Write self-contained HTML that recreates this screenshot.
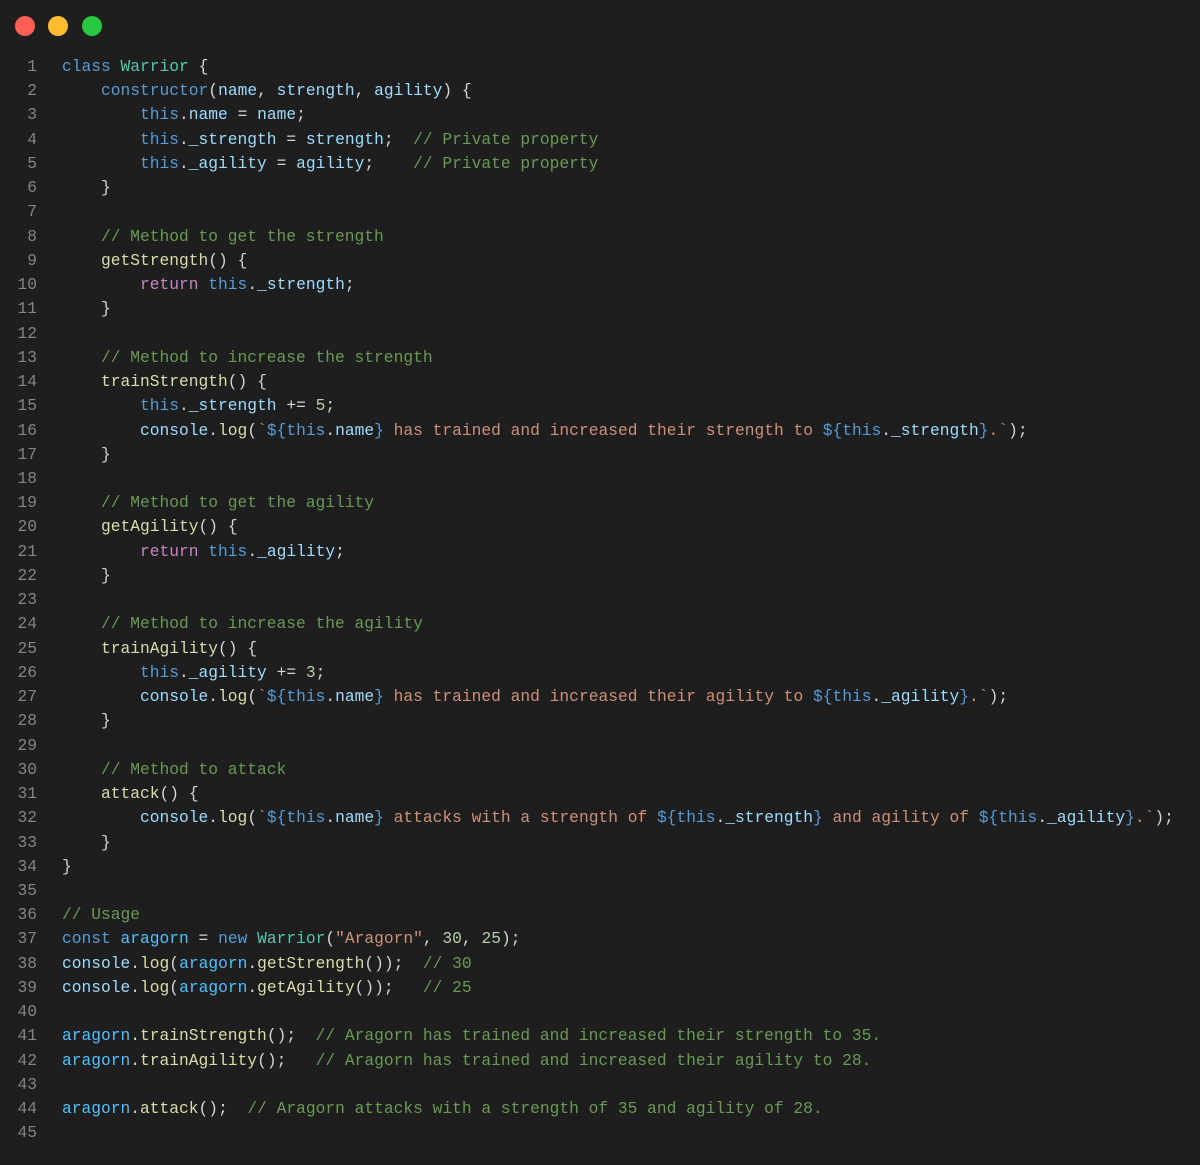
<!DOCTYPE html>
<html><head><meta charset="utf-8"><style>
html,body{margin:0;padding:0;background:#1e1e1e;width:1200px;height:1165px;overflow:hidden}
.dot{position:absolute;top:16px;width:20px;height:20px;border-radius:50%}
pre{position:absolute;left:0;top:55px;margin:0;font-family:"Liberation Mono",monospace;font-size:16.25px;line-height:24.23px;color:#d4d4d4}
.n{display:inline-block;width:37px;text-align:right;color:#858585;margin-right:25px}
.k{color:#569cd6}.c{color:#4ec9b0}.f{color:#dcdcaa}.v{color:#9cdcfe}.s{color:#ce9178}.m{color:#6a9955}.u{color:#b5cea8}.r{color:#c586c0}.a{color:#4fc1ff}.y{color:#d4d4d4}.p{color:#d4d4d4}.b{color:#d4d4d4}
</style></head><body>
<div class="dot" style="left:15px;background:#ff5f57"></div>
<div class="dot" style="left:48px;background:#febc2e"></div>
<div class="dot" style="left:82px;background:#28c840"></div>
<pre><span class="n">1</span><span class="k">class</span> <span class="c">Warrior</span> <span class="y">{</span>
<span class="n">2</span>    <span class="k">constructor</span><span class="p">(</span><span class="v">name</span>, <span class="v">strength</span>, <span class="v">agility</span><span class="p">)</span> <span class="p">{</span>
<span class="n">3</span>        <span class="k">this</span>.<span class="v">name</span> = <span class="v">name</span>;
<span class="n">4</span>        <span class="k">this</span>.<span class="v">_strength</span> = <span class="v">strength</span>;  <span class="m">// Private property</span>
<span class="n">5</span>        <span class="k">this</span>.<span class="v">_agility</span> = <span class="v">agility</span>;    <span class="m">// Private property</span>
<span class="n">6</span>    <span class="p">}</span>
<span class="n">7</span>
<span class="n">8</span>    <span class="m">// Method to get the strength</span>
<span class="n">9</span>    <span class="f">getStrength</span><span class="p">()</span> <span class="p">{</span>
<span class="n">10</span>        <span class="r">return</span> <span class="k">this</span>.<span class="v">_strength</span>;
<span class="n">11</span>    <span class="p">}</span>
<span class="n">12</span>
<span class="n">13</span>    <span class="m">// Method to increase the strength</span>
<span class="n">14</span>    <span class="f">trainStrength</span><span class="p">()</span> <span class="p">{</span>
<span class="n">15</span>        <span class="k">this</span>.<span class="v">_strength</span> += <span class="u">5</span>;
<span class="n">16</span>        <span class="v">console</span>.<span class="f">log</span><span class="b">(</span><span class="s">`</span><span class="k">${this</span>.<span class="v">name</span><span class="k">}</span><span class="s"> has trained and increased their strength to </span><span class="k">${this</span>.<span class="v">_strength</span><span class="k">}</span><span class="s">.`</span><span class="b">)</span>;
<span class="n">17</span>    <span class="p">}</span>
<span class="n">18</span>
<span class="n">19</span>    <span class="m">// Method to get the agility</span>
<span class="n">20</span>    <span class="f">getAgility</span><span class="p">()</span> <span class="p">{</span>
<span class="n">21</span>        <span class="r">return</span> <span class="k">this</span>.<span class="v">_agility</span>;
<span class="n">22</span>    <span class="p">}</span>
<span class="n">23</span>
<span class="n">24</span>    <span class="m">// Method to increase the agility</span>
<span class="n">25</span>    <span class="f">trainAgility</span><span class="p">()</span> <span class="p">{</span>
<span class="n">26</span>        <span class="k">this</span>.<span class="v">_agility</span> += <span class="u">3</span>;
<span class="n">27</span>        <span class="v">console</span>.<span class="f">log</span><span class="b">(</span><span class="s">`</span><span class="k">${this</span>.<span class="v">name</span><span class="k">}</span><span class="s"> has trained and increased their agility to </span><span class="k">${this</span>.<span class="v">_agility</span><span class="k">}</span><span class="s">.`</span><span class="b">)</span>;
<span class="n">28</span>    <span class="p">}</span>
<span class="n">29</span>
<span class="n">30</span>    <span class="m">// Method to attack</span>
<span class="n">31</span>    <span class="f">attack</span><span class="p">()</span> <span class="p">{</span>
<span class="n">32</span>        <span class="v">console</span>.<span class="f">log</span><span class="b">(</span><span class="s">`</span><span class="k">${this</span>.<span class="v">name</span><span class="k">}</span><span class="s"> attacks with a strength of </span><span class="k">${this</span>.<span class="v">_strength</span><span class="k">}</span><span class="s"> and agility of </span><span class="k">${this</span>.<span class="v">_agility</span><span class="k">}</span><span class="s">.`</span><span class="b">)</span>;
<span class="n">33</span>    <span class="p">}</span>
<span class="n">34</span><span class="y">}</span>
<span class="n">35</span>
<span class="n">36</span><span class="m">// Usage</span>
<span class="n">37</span><span class="k">const</span> <span class="a">aragorn</span> = <span class="k">new</span> <span class="c">Warrior</span><span class="y">(</span><span class="s">"Aragorn"</span>, <span class="u">30</span>, <span class="u">25</span><span class="y">)</span>;
<span class="n">38</span><span class="v">console</span>.<span class="f">log</span><span class="y">(</span><span class="a">aragorn</span>.<span class="f">getStrength</span><span class="p">()</span><span class="y">)</span>;  <span class="m">// 30</span>
<span class="n">39</span><span class="v">console</span>.<span class="f">log</span><span class="y">(</span><span class="a">aragorn</span>.<span class="f">getAgility</span><span class="p">()</span><span class="y">)</span>;   <span class="m">// 25</span>
<span class="n">40</span>
<span class="n">41</span><span class="a">aragorn</span>.<span class="f">trainStrength</span><span class="y">()</span>;  <span class="m">// Aragorn has trained and increased their strength to 35.</span>
<span class="n">42</span><span class="a">aragorn</span>.<span class="f">trainAgility</span><span class="y">()</span>;   <span class="m">// Aragorn has trained and increased their agility to 28.</span>
<span class="n">43</span>
<span class="n">44</span><span class="a">aragorn</span>.<span class="f">attack</span><span class="y">()</span>;  <span class="m">// Aragorn attacks with a strength of 35 and agility of 28.</span>
<span class="n">45</span>
</pre>
</body></html>
